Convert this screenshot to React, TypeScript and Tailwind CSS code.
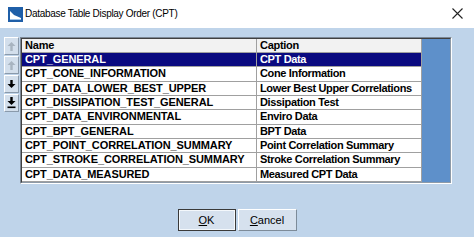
import React from "react";

const rows: [string, string][] = [
  ["CPT_GENERAL", "CPT Data"],
  ["CPT_CONE_INFORMATION", "Cone Information"],
  ["CPT_DATA_LOWER_BEST_UPPER", "Lower Best Upper Correlations"],
  ["CPT_DISSIPATION_TEST_GENERAL", "Dissipation Test"],
  ["CPT_DATA_ENVIRONMENTAL", "Enviro Data"],
  ["CPT_BPT_GENERAL", "BPT Data"],
  ["CPT_POINT_CORRELATION_SUMMARY", "Point Correlation Summary"],
  ["CPT_STROKE_CORRELATION_SUMMARY", "Stroke Correlation Summary"],
  ["CPT_DATA_MEASURED", "Measured CPT Data"],
];

function Arrow({ up, enabled }: { up: boolean; enabled: boolean }) {
  const c = enabled ? "#000000" : "#a8b4c0";
  return (
    <svg width="9" height="11" viewBox="0 0 9 11">
      {up ? (
        <path d="M4.5 1 L8.5 5 L5.7 5 L5.7 10 L3.3 10 L3.3 5 L0.5 5 Z" fill={c} />
      ) : (
        <path d="M3.3 1 L5.7 1 L5.7 5 L8.5 5 L4.5 9 L0.5 5 L3.3 5 Z" fill={c} />
      )}
    </svg>
  );
}

function ArrowBottom() {
  return (
    <svg width="9" height="12" viewBox="0 0 9 12">
      <path d="M3.3 0 L5.7 0 L5.7 4 L8.5 4 L4.5 8 L0.5 4 L3.3 4 Z" fill="#000" />
      <rect x="0.5" y="9.5" width="8" height="1.6" fill="#000" />
    </svg>
  );
}

function SideBtn({ up, enabled, last }: { up: boolean; enabled: boolean; last?: boolean }) {
  return (
    <div className="w-[15px] h-[18px] flex items-center justify-center bg-[#d3dfec] border-t border-l border-t-white border-l-white border-b border-r border-b-[#8a9aab] border-r-[#8a9aab]">
      {last ? <ArrowBottom /> : <Arrow up={up} enabled={enabled} />}
    </div>
  );
}

export default function App() {
  const font = { fontFamily: '"Liberation Sans", Arial, sans-serif' };
  return (
    <div className="w-[474px] h-[237px] flex flex-col bg-[#bfd4ea] overflow-hidden" style={font}>
      {/* title bar */}
      <div className="h-[28px] bg-white flex items-center pl-[8px] pr-[10px] shrink-0">
        <svg width="15" height="15" viewBox="0 0 15 15" className="mr-[2px]">
          <rect x="0" y="0" width="15" height="15" fill="#1f5fa8" />
          <path d="M2 12 L2 4 L6 8 L13 11 L13 12 Z" fill="#ffffff" />
          <path d="M2 12 L13 12 L13 13 L2 13 Z" fill="#9ec3ea" />
        </svg>
        <span className="text-[10px] tracking-[-0.3px] text-black leading-none" style={{ fontFamily: '"Liberation Sans", Arial, sans-serif' }}>
          Database Table Display Order (CPT)
        </span>
        <div className="flex-1" />
        <svg width="11" height="11" viewBox="0 0 11 11" className="mt-[-2px] mr-[1px]">
          <path d="M0.5 0.5 L10.5 10.5 M10.5 0.5 L0.5 10.5" stroke="#222" strokeWidth="1.1" />
        </svg>
      </div>

      {/* body */}
      <div className="flex pt-[9px] pl-[4px] pr-[22px]">
        <div className="flex flex-col gap-[1px] mr-[1px]">
          <SideBtn up enabled={false} />
          <SideBtn up enabled={false} />
          <SideBtn up={false} enabled />
          <SideBtn up={false} enabled last />
        </div>
        <div className="flex-1 h-[147px] border-t border-l border-t-[#7c8896] border-l-[#7c8896] border-b border-r border-b-white border-r-white">
          <div className="h-full flex border-t border-l border-t-[#404040] border-l-[#404040] border-b border-r border-b-[#8d9aa8] border-r-[#8d9aa8]">
            <div className="w-[400px] flex flex-col bg-white text-[11px] font-bold text-black">
              <div className="h-[14px] flex bg-[#f2f2f2] border-b border-[#a0a0a0]">
                <div className="w-[235px] pl-[3px] border-r border-[#a0a0a0] leading-[13px] tracking-[-0.2px]">Name</div>
                <div className="flex-1 pl-[3px] border-r border-[#a0a0a0] leading-[13px] tracking-[-0.3px]">Caption</div>
              </div>
              {rows.map(([n, c], i) => (
                <div
                  key={n}
                  className={
                    i === 0
                      ? "h-[14.4px] flex bg-[#0a0a80] text-white border-b border-[#a0a0a0]"
                      : "h-[14.4px] flex border-b border-[#a0a0a0]"
                  }
                >
                  <div className="w-[235px] pl-[3px] border-r border-[#a0a0a0] leading-[13px] tracking-[-0.1px] whitespace-nowrap overflow-hidden">{n}</div>
                  <div className="flex-1 pl-[3px] border-r border-[#a0a0a0] leading-[13px] tracking-[-0.35px] whitespace-nowrap overflow-hidden">{c}</div>
                </div>
              ))}
            </div>
            <div className="flex-1 bg-[#5e90ca]" />
          </div>
        </div>
      </div>

      {/* buttons */}
      <div className="flex justify-center gap-[2px] mt-[25px] text-[11px] text-black">
        <div className="w-[58px] h-[22px] bg-[#d6e1ee] border border-[#3a3a3a] flex items-center justify-center">
          <span className="w-full h-full flex items-center justify-center border border-[#f4f8fc]">
            <span><span className="underline">O</span>K</span>
          </span>
        </div>
        <div className="w-[59px] h-[22px] bg-[#d6e1ee] border-t border-l border-t-white border-l-white border-b border-r border-b-[#7d8b99] border-r-[#7d8b99] flex items-center justify-center">
          <span><span className="underline">C</span>ancel</span>
        </div>
      </div>
    </div>
  );
}
